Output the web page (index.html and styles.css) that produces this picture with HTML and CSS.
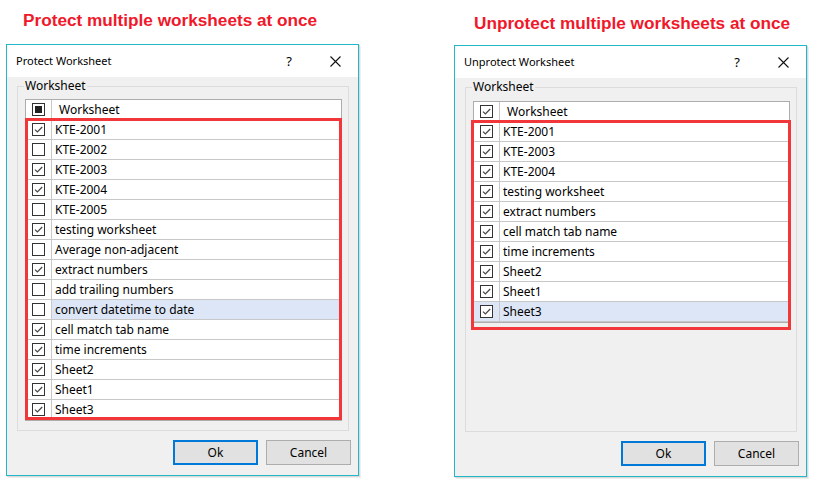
FILE: index.html
```html
<!DOCTYPE html>
<html lang="en">
<head>
<meta charset="utf-8">
<title>Protect / Unprotect worksheets</title>
<link rel="stylesheet" href="styles.css">
</head>
<body>
<div class="page">
  <section class="panel panel-left">
    <h1 class="caption">Protect multiple worksheets at once</h1>
    <div class="dialog">
      <div class="titlebar">
        <span class="title">Protect Worksheet</span>
        <span class="tb-btn help">?</span>
        <span class="tb-btn close"><svg width="11" height="11" viewBox="0 0 11 11"><path d="M0.5 0.5L10.5 10.5M10.5 0.5L0.5 10.5" stroke="#111" stroke-width="1.1" fill="none"/></svg></span>
      </div>
      <div class="body">
        <fieldset class="group">
          <legend>Worksheet</legend>
          <div class="list">
            <div class="row head"><span class="ck"><span class="box ind"><span class="dot"></span></span></span><span class="name">Worksheet</span></div>
            <div class="row"><span class="ck"><span class="box"><svg viewBox="0 0 11 11"><path d="M2 5.6L4.4 8L9.2 3" /></svg></span></span><span class="name">KTE-2001</span></div>
            <div class="row"><span class="ck"><span class="box"></span></span><span class="name">KTE-2002</span></div>
            <div class="row"><span class="ck"><span class="box"><svg viewBox="0 0 11 11"><path d="M2 5.6L4.4 8L9.2 3" /></svg></span></span><span class="name">KTE-2003</span></div>
            <div class="row"><span class="ck"><span class="box"><svg viewBox="0 0 11 11"><path d="M2 5.6L4.4 8L9.2 3" /></svg></span></span><span class="name">KTE-2004</span></div>
            <div class="row"><span class="ck"><span class="box"></span></span><span class="name">KTE-2005</span></div>
            <div class="row"><span class="ck"><span class="box"><svg viewBox="0 0 11 11"><path d="M2 5.6L4.4 8L9.2 3" /></svg></span></span><span class="name">testing worksheet</span></div>
            <div class="row"><span class="ck"><span class="box"></span></span><span class="name">Average non-adjacent</span></div>
            <div class="row"><span class="ck"><span class="box"><svg viewBox="0 0 11 11"><path d="M2 5.6L4.4 8L9.2 3" /></svg></span></span><span class="name">extract numbers</span></div>
            <div class="row"><span class="ck"><span class="box"></span></span><span class="name">add trailing numbers</span></div>
            <div class="row sel-name"><span class="ck"><span class="box"></span></span><span class="name">convert datetime to date</span></div>
            <div class="row"><span class="ck"><span class="box"><svg viewBox="0 0 11 11"><path d="M2 5.6L4.4 8L9.2 3" /></svg></span></span><span class="name">cell match tab name</span></div>
            <div class="row"><span class="ck"><span class="box"><svg viewBox="0 0 11 11"><path d="M2 5.6L4.4 8L9.2 3" /></svg></span></span><span class="name">time increments</span></div>
            <div class="row"><span class="ck"><span class="box"><svg viewBox="0 0 11 11"><path d="M2 5.6L4.4 8L9.2 3" /></svg></span></span><span class="name">Sheet2</span></div>
            <div class="row"><span class="ck"><span class="box"><svg viewBox="0 0 11 11"><path d="M2 5.6L4.4 8L9.2 3" /></svg></span></span><span class="name">Sheet1</span></div>
            <div class="row"><span class="ck"><span class="box"><svg viewBox="0 0 11 11"><path d="M2 5.6L4.4 8L9.2 3" /></svg></span></span><span class="name">Sheet3</span></div>
            <div class="mark mark-left"></div>
          </div>
        </fieldset>
        <div class="buttons">
          <button class="btn btn-default">Ok</button>
          <button class="btn">Cancel</button>
        </div>
      </div>
    </div>
  </section>

  <section class="panel panel-right">
    <h1 class="caption">Unprotect multiple worksheets at once</h1>
    <div class="dialog">
      <div class="titlebar">
        <span class="title">Unprotect Worksheet</span>
        <span class="tb-btn help">?</span>
        <span class="tb-btn close"><svg width="11" height="11" viewBox="0 0 11 11"><path d="M0.5 0.5L10.5 10.5M10.5 0.5L0.5 10.5" stroke="#111" stroke-width="1.1" fill="none"/></svg></span>
      </div>
      <div class="body">
        <fieldset class="group">
          <legend>Worksheet</legend>
          <div class="list">
            <div class="row head"><span class="ck"><span class="box"><svg viewBox="0 0 11 11"><path d="M2 5.6L4.4 8L9.2 3" /></svg></span></span><span class="name">Worksheet</span></div>
            <div class="row"><span class="ck"><span class="box"><svg viewBox="0 0 11 11"><path d="M2 5.6L4.4 8L9.2 3" /></svg></span></span><span class="name">KTE-2001</span></div>
            <div class="row"><span class="ck"><span class="box"><svg viewBox="0 0 11 11"><path d="M2 5.6L4.4 8L9.2 3" /></svg></span></span><span class="name">KTE-2003</span></div>
            <div class="row"><span class="ck"><span class="box"><svg viewBox="0 0 11 11"><path d="M2 5.6L4.4 8L9.2 3" /></svg></span></span><span class="name">KTE-2004</span></div>
            <div class="row"><span class="ck"><span class="box"><svg viewBox="0 0 11 11"><path d="M2 5.6L4.4 8L9.2 3" /></svg></span></span><span class="name">testing worksheet</span></div>
            <div class="row"><span class="ck"><span class="box"><svg viewBox="0 0 11 11"><path d="M2 5.6L4.4 8L9.2 3" /></svg></span></span><span class="name">extract numbers</span></div>
            <div class="row"><span class="ck"><span class="box"><svg viewBox="0 0 11 11"><path d="M2 5.6L4.4 8L9.2 3" /></svg></span></span><span class="name">cell match tab name</span></div>
            <div class="row"><span class="ck"><span class="box"><svg viewBox="0 0 11 11"><path d="M2 5.6L4.4 8L9.2 3" /></svg></span></span><span class="name">time increments</span></div>
            <div class="row"><span class="ck"><span class="box"><svg viewBox="0 0 11 11"><path d="M2 5.6L4.4 8L9.2 3" /></svg></span></span><span class="name">Sheet2</span></div>
            <div class="row"><span class="ck"><span class="box"><svg viewBox="0 0 11 11"><path d="M2 5.6L4.4 8L9.2 3" /></svg></span></span><span class="name">Sheet1</span></div>
            <div class="row sel-row"><span class="ck"><span class="box"><svg viewBox="0 0 11 11"><path d="M2 5.6L4.4 8L9.2 3" /></svg></span></span><span class="name">Sheet3</span></div>
            <div class="mark mark-right"></div>
          </div>
        </fieldset>
        <div class="buttons">
          <button class="btn btn-default">Ok</button>
          <button class="btn">Cancel</button>
        </div>
      </div>
    </div>
  </section>
</div>
</body>
</html>
```
FILE: styles.css
```css
* { box-sizing: border-box; }

html, body {
  margin: 0;
  padding: 0;
  background: #ffffff;
}

body {
  width: 823px;
  height: 484px;
  overflow: hidden;
  font-family: "Noto Sans", "Liberation Sans", Arial, sans-serif;
  font-size: 12px;
  color: #000;
}

.page {
  display: flex;
  align-items: flex-start;
}

.panel {
  width: 353px;
  display: flex;
  flex-direction: column;
}

.panel-left {
  margin-left: 6px;
  padding-top: 10px;
}

.panel-right {
  margin-left: 95px;
  padding-top: 13px;
}

.caption {
  margin: 0;
  font-family: "Liberation Sans", Arial, sans-serif;
  font-weight: bold;
  font-size: 17.2px;
  line-height: 20px;
  color: #f0182a;
  white-space: nowrap;
}

.panel-left .caption { padding-left: 17px; margin-bottom: 14px; }
.panel-right .caption { padding-left: 20px; margin-bottom: 12px; }

.dialog {
  height: 432px;
  border: 1px solid #22b8c8;
  background: #f0f0f0;
  display: flex;
  flex-direction: column;
  box-shadow: 1px 1px 0 #d9d9d9, 2px 2px 0 #efefef;
}

.titlebar {
  height: 32px;
  flex: none;
  background: #ffffff;
  display: flex;
  align-items: center;
}

.title {
  flex: 1;
  padding-left: 9px;
  padding-bottom: 1px;
  white-space: nowrap;
  font-size: 11px;
}

.tb-btn {
  width: 46px;
  height: 100%;
  display: flex;
  align-items: center;
  justify-content: center;
}

.help {
  font-size: 13px;
  padding-bottom: 1px;
}

.body {
  flex: 1;
  display: flex;
  flex-direction: column;
  padding: 0 7px 10px 10px;
}

.group {
  flex: 1;
  margin: 0 2px 0 0;
  padding: 4px 6px 7px 7px;
  border: 1px solid #dcdcdc;
  display: flex;
  flex-direction: column;
  min-width: 0;
}

.panel-right .group { padding-top: 5px; }

.group legend {
  padding: 0 1px;
  margin-left: -1px;
  line-height: 18px;
  color: #000;
}

.list {
  position: relative;
  flex: 1;
  background: #ffffff;
  border: 1px solid #adadad;
}

.row {
  display: flex;
  height: 20px;
  border-bottom: 1px solid #c8c8c8;
}

.ck {
  width: 26px;
  flex: none;
  border-right: 1px solid #c8c8c8;
  display: flex;
  align-items: center;
  justify-content: center;
  padding-right: 1px;
}

.box {
  width: 13px;
  height: 13px;
  border: 1px solid #333333;
  background: #fff;
  display: flex;
  align-items: center;
  justify-content: center;
}

.box svg {
  width: 11px;
  height: 11px;
  fill: none;
  stroke: #444;
  stroke-width: 1.2;
}

.box .dot {
  width: 7px;
  height: 7px;
  background: #222;
}

.name {
  flex: 1;
  padding-left: 3px;
  line-height: 19px;
  white-space: nowrap;
}

.head .name { padding-left: 7px; }

.sel-name .name { background: #dce6f6; }
.sel-row { background: #dce6f6; }
.sel-row .box { background: #fff; }

.mark {
  position: absolute;
  border: 3px solid #f2373b;
  pointer-events: none;
}

.mark-left {
  left: -1px;
  top: 18px;
  width: 317px;
  height: 302px;
}

.mark-right {
  left: -3px;
  top: 18px;
  width: 320px;
  height: 210px;
}

.buttons {
  flex: none;
  display: flex;
  justify-content: flex-end;
  gap: 8px;
  margin-top: 9px;
}

.btn {
  width: 85px;
  height: 25px;
  font-family: "Noto Sans", "Liberation Sans", Arial, sans-serif;
  font-size: 12px;
  color: #000;
  background: #e1e1e1;
  border: 1px solid #adadad;
  padding: 0;
  margin: 0;
}

.btn-default {
  border: 2px solid #0078d7;
}
```
